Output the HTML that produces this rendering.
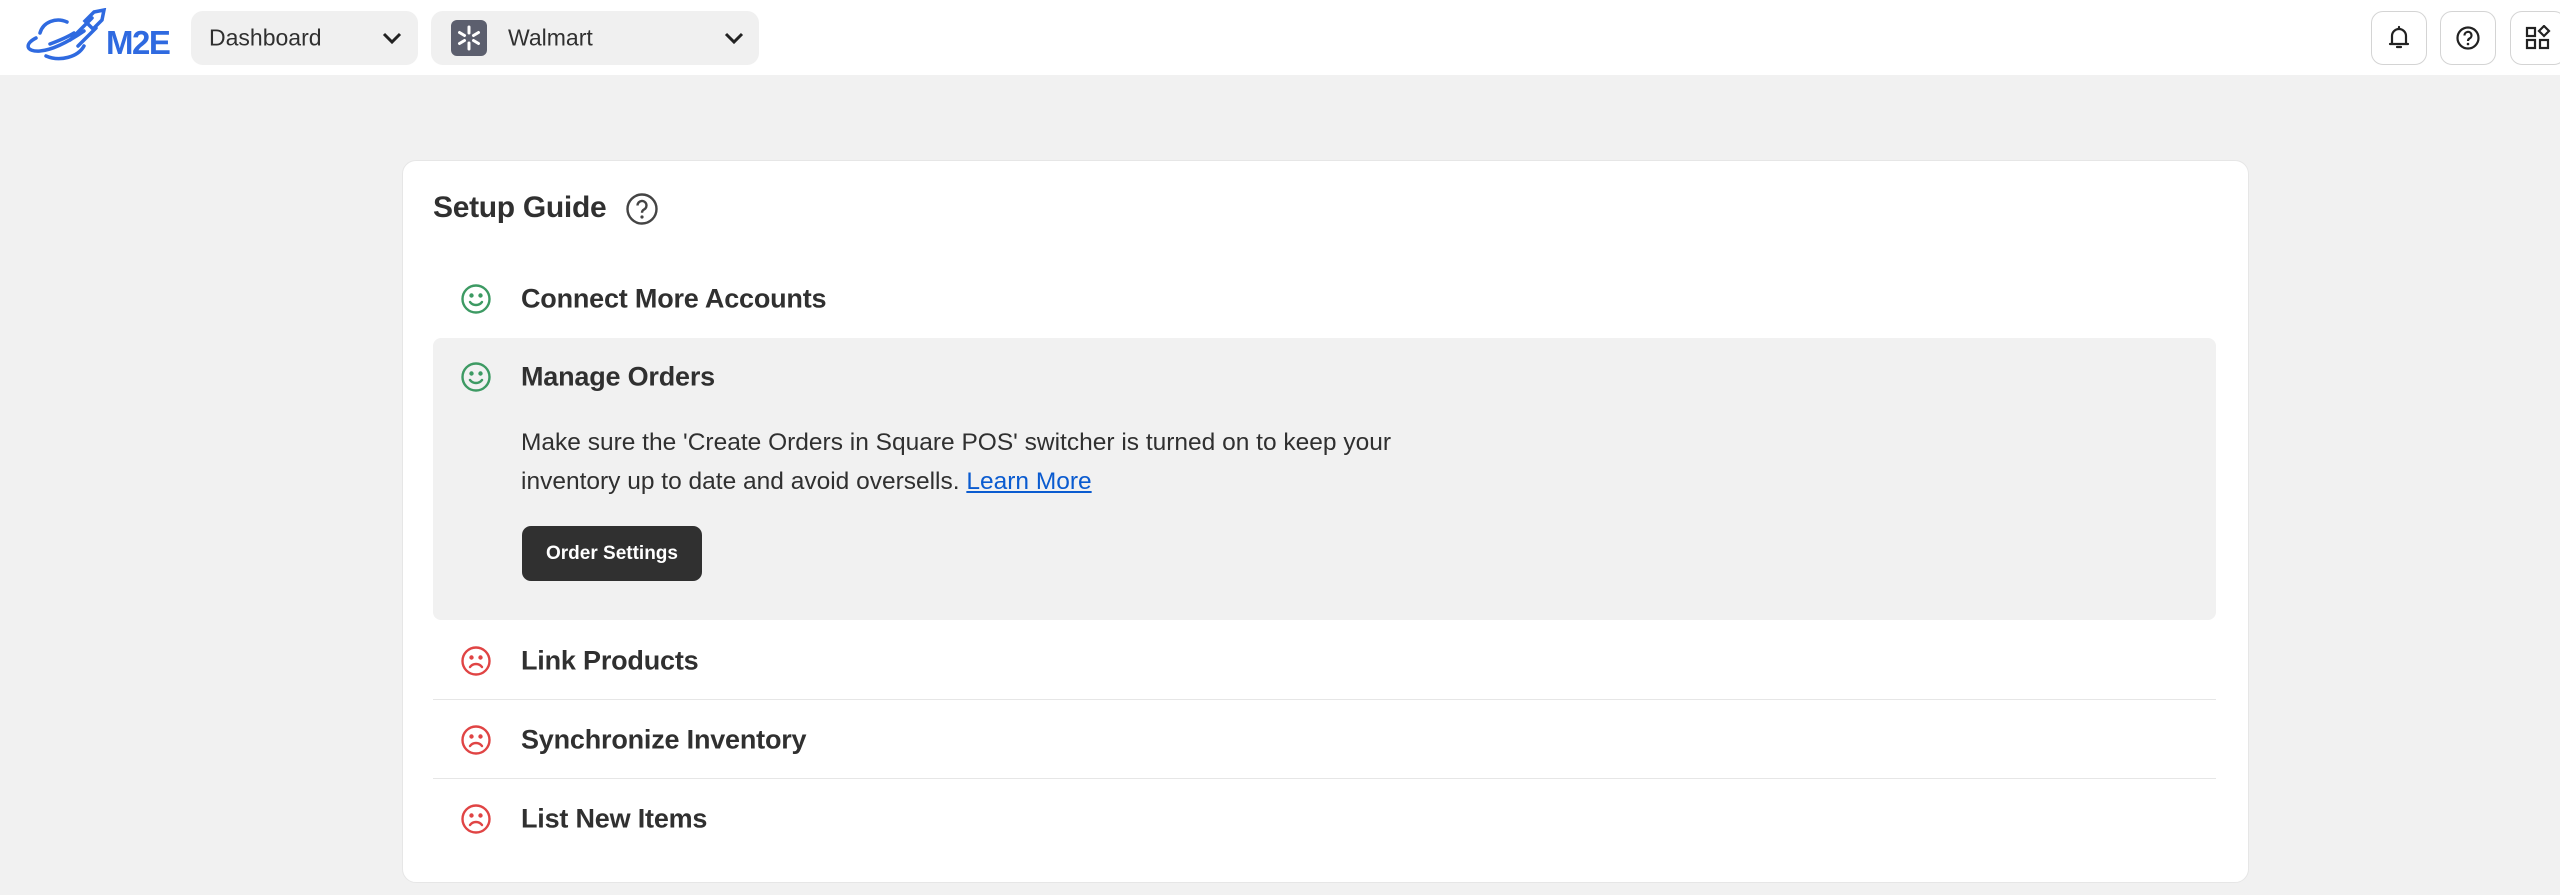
<!DOCTYPE html>
<html><head><meta charset="utf-8">
<style>
*{box-sizing:border-box;margin:0;padding:0}
body{width:2560px;height:895px;background:#f1f1f1;font-family:"Liberation Sans",sans-serif;color:#303030;position:relative;overflow:hidden}
.hdr{position:absolute;left:0;top:0;width:2560px;height:75px;background:#fff}
.sel{position:absolute;top:11px;height:54px;background:#f0f0f0;border-radius:12px}
.sel span{position:absolute;top:50%;transform:translateY(-50%);font-size:23px;color:#303030}
.chev{position:absolute;top:50%;transform:translateY(-50%)}
.ib{position:absolute;top:11px;width:56px;height:54px;border:1.5px solid #d4d4d4;border-radius:12px;background:#fff}
.ib svg{position:absolute;left:50%;top:50%;transform:translate(-50%,-50%)}
.card{position:absolute;left:402px;top:160px;width:1847px;height:723px;background:#fff;border-radius:14px;border:1px solid #e6e6e6}
.t{position:absolute;font-weight:bold}
.row{position:absolute;left:521px;font-size:27px;font-weight:bold;letter-spacing:-0.2px;transform:translateY(-50%)}
.ic{position:absolute;transform:translate(-50%,-50%)}
.div{position:absolute;left:433px;width:1783px;height:1px;background:#e6e6e6}
</style></head><body>
<div class="hdr">
  <svg style="position:absolute;left:24px;top:8px" width="150" height="60" viewBox="0 0 150 60">
    <g fill="none" stroke="#2f6ae0" stroke-width="3.5" stroke-linecap="round">
      <path d="M12 30c-12 6-10 14 4 13 12-1 28-9 44-20"/>
      <path d="M16 25c3-11 16-16 27-11"/>
      <path d="M22 48c14 6 32 1 38-10"/>
      <path d="M46 32l22-22M54 38l18-18"/>
      <path d="M70 4l10-2-2 10-9 9-8-8z"/>
      <path d="M26 36c8-3 16-6 24-11"/>
    </g>
    <text x="82" y="46" font-family="Liberation Sans" font-weight="bold" font-size="33" fill="#2f6ae0" letter-spacing="-1.5">M2E</text>
  </svg>
  <div class="sel" style="left:191px;width:227px"><span style="left:18px">Dashboard</span>
    <svg class="chev" style="left:190px" width="22" height="14" viewBox="0 0 22 14"><path d="M3 3l8 8 8-8" fill="none" stroke="#222" stroke-width="3"/></svg></div>
  <div class="sel" style="left:431px;width:328px">
    <div style="position:absolute;left:20px;top:9px;width:36px;height:36px;background:#5c5f6e;border-radius:6px">
      <svg width="36" height="36" viewBox="0 0 36 36"><g stroke="#fff" stroke-width="3" stroke-linecap="round"><path d="M18 7v6M18 23v6M8.5 12.5l5 3M22.5 20.5l5 3M8.5 23.5l5-3M22.5 15.5l5-3"/></g></svg>
    </div>
    <span style="left:77px">Walmart</span>
    <svg class="chev" style="left:292px" width="22" height="14" viewBox="0 0 22 14"><path d="M3 3l8 8 8-8" fill="none" stroke="#222" stroke-width="3"/></svg></div>
  <div class="ib" style="left:2371px"><svg width="24" height="26" viewBox="0 0 24 26"><path d="M5 19V11a7 7 0 0 1 14 0v8M3 19h18M12 2v2M10 22h4" fill="none" stroke="#222" stroke-width="2.2" stroke-linecap="round"/></svg></div>
  <div class="ib" style="left:2440px"><svg width="26" height="26" viewBox="0 0 26 26"><circle cx="13" cy="13" r="10.5" fill="none" stroke="#222" stroke-width="2.2"/><path d="M9.5 10.5a3.5 3.5 0 1 1 5 3c-1 .6-1.5 1.2-1.5 2.5" fill="none" stroke="#222" stroke-width="2.2"/><circle cx="13" cy="19" r="1.3" fill="#222"/></svg></div>
  <div class="ib" style="left:2510px"><svg width="26" height="26" viewBox="0 0 26 26"><g fill="none" stroke="#222" stroke-width="2.2"><rect x="2" y="3" width="8" height="8"/><rect x="2" y="15" width="8" height="8"/><rect x="15" y="15" width="8" height="8"/><path d="M19 1l5 5-5 5-5-5z"/></g></svg></div>
</div>

<div class="card"></div>
<div class="t" style="left:433px;top:191px;font-size:30px;letter-spacing:-0.3px">Setup Guide</div>
<svg class="ic" style="left:642px;top:209px" width="34" height="34" viewBox="0 0 34 34"><circle cx="17" cy="17" r="14.5" fill="none" stroke="#444" stroke-width="2.4"/><path d="M12.5 13.5a4.5 4.5 0 1 1 6.5 4c-1.3.7-2 1.5-2 3.2" fill="none" stroke="#444" stroke-width="2.4"/><circle cx="17" cy="25" r="1.6" fill="#444"/></svg>

<div style="position:absolute;left:433px;top:338px;width:1783px;height:282px;background:#f1f1f1;border-radius:8px"></div>

<svg width="0" height="0" style="position:absolute"><defs>
<g id="happy" fill="none" stroke="#3d9a63" stroke-width="2.4"><circle cx="16" cy="16" r="13.5"/><path d="M10 19c3 4 9 4 12 0" stroke-linecap="round"/><circle cx="11.5" cy="12.5" r="1" fill="#3d9a63"/><circle cx="20.5" cy="12.5" r="1" fill="#3d9a63"/></g>
<g id="sad" fill="none" stroke="#e04444" stroke-width="2.4"><circle cx="16" cy="16" r="13.5"/><path d="M10 22c3-4 9-4 12 0" stroke-linecap="round"/><circle cx="11.5" cy="12.5" r="1" fill="#e04444"/><circle cx="20.5" cy="12.5" r="1" fill="#e04444"/></g>
</defs></svg>

<svg class="ic" style="left:476px;top:299px" width="32" height="32"><use href="#happy"/></svg>
<div class="row" style="top:299px">Connect More Accounts</div>
<svg class="ic" style="left:476px;top:377px" width="32" height="32"><use href="#happy"/></svg>
<div class="row" style="top:377px">Manage Orders</div>
<div style="position:absolute;left:521px;top:423px;font-size:24.5px;line-height:39px;color:#303030;letter-spacing:0px">Make sure the 'Create Orders in Square POS' switcher is turned on to keep your<br>inventory up to date and avoid oversells. <span style="color:#0a5bd0;text-decoration:underline">Learn More</span></div>
<div style="position:absolute;left:522px;top:526px;width:180px;height:55px;background:#303030;border-radius:9px;color:#fff;font-weight:bold;font-size:19px;line-height:55px;text-align:center">Order Settings</div>

<svg class="ic" style="left:476px;top:661px" width="32" height="32"><use href="#sad"/></svg>
<div class="row" style="top:661px">Link Products</div>
<div class="div" style="top:699px"></div>
<svg class="ic" style="left:476px;top:740px" width="32" height="32"><use href="#sad"/></svg>
<div class="row" style="top:740px">Synchronize Inventory</div>
<div class="div" style="top:778px"></div>
<svg class="ic" style="left:476px;top:819px" width="32" height="32"><use href="#sad"/></svg>
<div class="row" style="top:819px">List New Items</div>
</body></html>
